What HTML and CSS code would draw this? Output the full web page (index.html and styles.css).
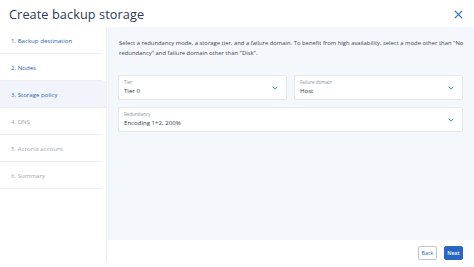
FILE: index.html
```html
<!DOCTYPE html>
<html>
<head>
<meta charset="utf-8">
<link rel="stylesheet" href="styles.css">
</head>
<body>
<div class="dialog">
  <div class="header">
    <div class="title">Create backup storage</div>
    <svg class="close" width="9" height="9" viewBox="0 0 10 10"><path d="M1 1L9 9M9 1L1 9" stroke="#2f6bc2" stroke-width="1.3" fill="none"/></svg>
  </div>
  <div class="body">
    <div class="sidebar">
      <div class="step done">1. Backup destination</div>
      <div class="step done">2. Nodes</div>
      <div class="step active">3. Storage policy</div>
      <div class="step">4. DNS</div>
      <div class="step">5. Acronis account</div>
      <div class="step">6. Summary</div>
    </div>
    <div class="right">
      <div class="panel">
        <p class="desc">Select a redundancy mode, a storage tier, and a failure domain. To benefit from high availability, select a mode other than "No<br>redundancy" and failure domain other than "Disk".</p>
        <div class="row">
          <div class="field">
            <div class="label">Tier</div>
            <div class="value">Tier 0</div>
            <svg class="chev" width="6" height="4" viewBox="0 0 6 4"><path d="M0.6 0.8L3 3.1L5.4 0.8" stroke="#2f6bc2" stroke-width="0.9" fill="none"/></svg>
          </div>
          <div class="field">
            <div class="label">Failure domain</div>
            <div class="value">Host</div>
            <svg class="chev" width="6" height="4" viewBox="0 0 6 4"><path d="M0.6 0.8L3 3.1L5.4 0.8" stroke="#2f6bc2" stroke-width="0.9" fill="none"/></svg>
          </div>
        </div>
        <div class="row">
          <div class="field">
            <div class="label">Redundancy</div>
            <div class="value">Encoding 1+2, 200%</div>
            <svg class="chev" width="6" height="4" viewBox="0 0 6 4"><path d="M0.6 0.8L3 3.1L5.4 0.8" stroke="#2f6bc2" stroke-width="0.9" fill="none"/></svg>
          </div>
        </div>
      </div>
      <div class="footer">
        <button class="btn back">Back</button>
        <button class="btn next">Next</button>
      </div>
    </div>
  </div>
</div>
</body>
</html>
```
FILE: styles.css
```css
* { box-sizing: border-box; }
html, body { margin: 0; padding: 0; background: #fff; }
body { width: 474px; height: 267px; overflow: hidden; font-family: "Open Sans", "Noto Sans", sans-serif; }
.dialog { display: flex; flex-direction: column; height: 267px; }
.header { height: 27px; display: flex; align-items: center; justify-content: space-between; padding: 0 11px 0 9px; }
.title { font-size: 12.7px; color: #2b3a52; letter-spacing: 0.1px; }
.close { display: block; margin-top: 1px; }
.body { display: flex; flex: 1; min-height: 0; }
.sidebar { width: 107px; border-right: 1px solid #eceef2; margin-bottom: 5px; display: flex; flex-direction: column; }
.step { height: 27px; display: flex; align-items: center; padding-left: 11px; font-size: 6.1px; color: #a2a9b2; border-bottom: 1px solid #eceef1; margin-right: 4px; }
.step.done { color: #2e64ac; }
.step.active { color: #2e64ac; background: #f1f5fb; margin-right: 0; }
.right { flex: 1; display: flex; flex-direction: column; min-width: 0; }
.panel { height: 213px; background: #f4f7fb; border-left: 1px solid #edf1f6; padding: 11px 11px 0 9px; margin-left: 1px; }
.desc { margin: 0 -12px 0 0; font-size: 5.88px; line-height: 10px; color: #3a4555; padding-left: 1px; }
.row { display: flex; gap: 7px; margin-top: 7px; }
.desc + .row { margin-top: 17px; }
.field { flex: 1; height: 25px; background: #fff; border: 1px solid #e4e9f0; border-radius: 2px; position: relative; padding: 3px 0 0 5px; }
.label { font-size: 4.6px; line-height: 6px; color: #8a939e; }
.value { font-size: 6.1px; line-height: 11px; color: #2f3a4a; }
.chev { position: absolute; right: 8px; top: 10px; }
.footer { flex: 1; display: flex; justify-content: flex-end; align-items: flex-start; padding: 6px 11px 0 0; gap: 7px; }
.btn { height: 14px; width: 19px; padding: 0; font-family: inherit; font-size: 5.4px; border-radius: 2px; cursor: pointer; }
.btn.back { background: #fff; border: 1px solid #b9c6d8; color: #2e64ac; }
.btn.next { background: #2a67c4; border: 1px solid #2a67c4; color: #fff; font-weight: 600; }
```
